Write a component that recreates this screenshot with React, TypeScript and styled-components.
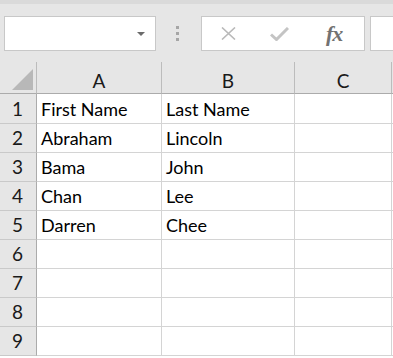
import React from "react";
import styled, { createGlobalStyle } from "styled-components";

const Global = createGlobalStyle`
  html, body { margin: 0; padding: 0; background: #e6e6e6; }
  body { font-family: Lato, "Open Sans", sans-serif; overflow: hidden; }
`;

const Page = styled.div`
  width: 393px;
  height: 358px;
  display: flex;
  flex-direction: column;
  background: #e6e6e6;
  overflow: hidden;
`;

const TopStrip = styled.div`
  height: 4px;
  background: #dadada;
`;

const Toolbar = styled.div`
  height: 58px;
  display: flex;
  align-items: flex-start;
  padding: 12px 0 0 4px;
  box-sizing: border-box;
`;

const NameBox = styled.div`
  width: 152px;
  height: 35px;
  box-sizing: border-box;
  background: #fff;
  border: 1px solid #c8c8c8;
  display: flex;
  align-items: center;
  justify-content: flex-end;
  padding-right: 10px;
`;

const Caret = styled.div`
  width: 0;
  height: 0;
  border-left: 4px solid transparent;
  border-right: 4px solid transparent;
  border-top: 4px solid #6b6b6b;
`;

const Dots = styled.div`
  width: 42px;
  height: 35px;
  display: flex;
  flex-direction: column;
  align-items: center;
  justify-content: center;
  gap: 3px;
`;

const Dot = styled.span`
  width: 3px;
  height: 3px;
  background: #a6a6a6;
`;

const FormulaButtons = styled.div`
  width: 164px;
  height: 35px;
  margin-left: 3px;
  box-sizing: border-box;
  background: #fff;
  border: 1px solid #c8c8c8;
  display: flex;
  align-items: center;
  padding-left: 18px;
  gap: 35px;
`;

const Fx = styled.span`
  font-family: "Liberation Serif", "DejaVu Serif", serif;
  font-style: italic;
  font-weight: bold;
  font-size: 22px;
  color: #727272;
  letter-spacing: -1px;
  margin-left: 2px;
  line-height: 1;
`;

const FormulaInput = styled.div`
  flex: 1;
  height: 35px;
  margin-left: 5px;
  box-sizing: border-box;
  background: #fff;
  border: 1px solid #c8c8c8;
  border-right: none;
`;

const Grid = styled.div`
  display: grid;
  grid-template-columns: 37px 125px 133px 97px 1fr;
  grid-auto-rows: 29px;
  grid-template-rows: 32px 30px;
  background: #fff;
  flex: 1;
`;

const Corner = styled.div`
  background: #e6e6e6;
  border-right: 1px solid #bcbcbc;
  border-bottom: 1px solid #ababab;
  display: flex;
  align-items: flex-end;
  justify-content: flex-end;
  padding: 0 3px 3px 0;
  box-sizing: border-box;
`;

const ColHead = styled.div`
  background: #e6e6e6;
  border-right: 1px solid #bcbcbc;
  border-bottom: 1px solid #ababab;
  box-sizing: border-box;
  display: flex;
  align-items: flex-end;
  justify-content: center;
  font-size: 19px;
  line-height: 1;
  padding-bottom: 3px;
  color: #1a1a1a;
`;

const RowHead = styled.div`
  background: #e6e6e6;
  border-right: 1px solid #ababab;
  border-bottom: 1px solid #c9c9c9;
  box-sizing: border-box;
  display: flex;
  align-items: flex-end;
  justify-content: center;
  font-size: 19px;
  line-height: 1;
  padding: 0 1px 5px 0;
  color: #1a1a1a;
`;

const Cell = styled.div`
  border-right: 1px solid #d4d4d4;
  border-bottom: 1px solid #d4d4d4;
  box-sizing: border-box;
  display: flex;
  align-items: flex-end;
  padding: 0 0 5px 4px;
  font-size: 18px;
  line-height: 1;
  color: #000;
  white-space: nowrap;
  overflow: hidden;
`;

const data: string[][] = [
  ["First Name", "Last Name"],
  ["Abraham", "Lincoln"],
  ["Bama", "John"],
  ["Chan", "Lee"],
  ["Darren", "Chee"],
  ["", ""],
  ["", ""],
  ["", ""],
  ["", ""],
];

export default function App() {
  return (
    <Page>
      <Global />
      <TopStrip />
      <Toolbar>
        <NameBox>
          <Caret />
        </NameBox>
        <Dots>
          <Dot />
          <Dot />
          <Dot />
        </Dots>
        <FormulaButtons>
          <svg width="17" height="13" viewBox="0 0 17 13">
            <path d="M2 0.5 L15 12.5 M15 0.5 L2 12.5" stroke="#b9b9b9" strokeWidth="1.6" fill="none" />
          </svg>
          <svg width="19" height="14" viewBox="0 0 19 14" style={{ marginLeft: -2 }}>
            <path d="M1 7.5 L6.5 12.5 L18 1" stroke="#c4c4c4" strokeWidth="3" fill="none" />
          </svg>
          <Fx>fx</Fx>
        </FormulaButtons>
        <FormulaInput />
      </Toolbar>
      <Grid>
        <Corner>
          <svg width="21" height="21" viewBox="0 0 21 21">
            <path d="M21 0 L21 21 L0 21 Z" fill="#b8b8b8" />
          </svg>
        </Corner>
        <ColHead>A</ColHead>
        <ColHead>B</ColHead>
        <ColHead>C</ColHead>
        <ColHead />
        {data.map((row, i) => (
          <React.Fragment key={i}>
            <RowHead>{i + 1}</RowHead>
            <Cell>{row[0]}</Cell>
            <Cell>{row[1]}</Cell>
            <Cell />
            <Cell />
          </React.Fragment>
        ))}
      </Grid>
    </Page>
  );
}
